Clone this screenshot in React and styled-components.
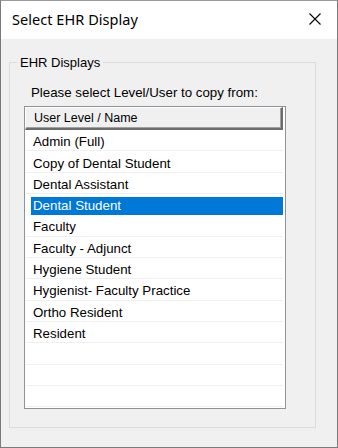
import React from "react";
import styled, { createGlobalStyle } from "styled-components";

const Global = createGlobalStyle`
  html, body { margin: 0; padding: 0; background: #f0f0f0; }
  body { width: 338px; height: 448px; overflow: hidden; }
  * { box-sizing: border-box; }
`;

const Window = styled.div`
  width: 338px;
  height: 448px;
  border: 1px solid #7a7a7a;
  border-top-color: #9a9a9a;
  display: flex;
  flex-direction: column;
  background: #f0f0f0;
`;

const TitleBar = styled.div`
  height: 38px;
  background: #ffffff;
  display: flex;
  align-items: center;
  justify-content: space-between;
  padding: 0 0 2px 11px;
`;

const Title = styled.div`
  font-family: "Noto Sans", "Open Sans", sans-serif;
  font-size: 14.5px;
  color: #000;
  letter-spacing: 0.05px;
`;

const CloseButton = styled.div`
  width: 46px;
  height: 36px;
  display: flex;
  align-items: center;
  justify-content: center;
  margin-right: -1px;
`;

const Body = styled.div`
  flex: 1;
  padding: 16px 0 0 8px;
`;

const GroupBox = styled.fieldset`
  margin: 0;
  width: 307px;
  height: 373px;
  border: 1px solid #dcdcdc;
  padding: 0 0 0 14px;
  font-family: "Liberation Sans", Arial, sans-serif;
`;

const Legend = styled.legend`
  font-size: 13px;
  color: #000;
  padding: 0 3px;
  margin-left: -7px;
  line-height: 15px;
`;

const Prompt = styled.div`
  font-size: 13.3px;
  color: #000;
  margin: 15px 0 0 7px;
  line-height: 16px;
`;

const ListBox = styled.div`
  margin-top: 5px;
  width: 262px;
  height: 303px;
  border: 1px solid #8f9399;
  background: #fff;
  overflow: hidden;
  padding-right: 1px;
`;

const Header = styled.div`
  height: 23px;
  background: #f0f0f0;
  border-top: 1px solid #ffffff;
  border-left: 1px solid #ffffff;
  border-right: 2px solid #6d6d6d;
  border-bottom: 2px solid #6d6d6d;
  box-shadow: inset -1px -1px 0 #a0a0a0;
  display: flex;
  align-items: center;
  padding-left: 8px;
  font-size: 12.5px;
  color: #000;
  margin-right: 1px;
`;

const Row = styled.div`
  height: 21.33px;
  border-bottom: 1px solid #f0f0f0;
  margin: 0 1px 0 1px;
  display: flex;
  align-items: center;
  padding-top: 3px;
`;

const Cell = styled.div`
  margin-left: 5px;
  width: 252px;
  height: 18px;
  display: flex;
  align-items: center;
  padding-left: 2px;
  font-size: 13.3px;
  white-space: nowrap;
  background: ${(p) => (p.$selected ? "#0078d7" : "transparent")};
  color: ${(p) => (p.$selected ? "#ffffff" : "#000000")};
`;

const items = [
  "Admin (Full)",
  "Copy of Dental Student",
  "Dental Assistant",
  "Dental Student",
  "Faculty",
  "Faculty - Adjunct",
  "Hygiene Student",
  "Hygienist- Faculty Practice",
  "Ortho Resident",
  "Resident",
  "",
  "",
  "",
];

export default function App() {
  return (
    <>
      <Global />
      <Window>
        <TitleBar>
          <Title>Select EHR Display</Title>
          <CloseButton>
            <svg width="12" height="12" viewBox="0 0 12 12">
              <path d="M0.5 0.5 L11.5 11.5 M11.5 0.5 L0.5 11.5" stroke="#000" strokeWidth="1.1" fill="none" />
            </svg>
          </CloseButton>
        </TitleBar>
        <Body>
          <GroupBox>
            <Legend>EHR Displays</Legend>
            <Prompt>Please select Level/User to copy from:</Prompt>
            <ListBox>
              <Header>User Level / Name</Header>
              {items.map((t, i) => (
                <Row key={i}>
                  <Cell $selected={t === "Dental Student"}>{t}</Cell>
                </Row>
              ))}
            </ListBox>
          </GroupBox>
        </Body>
      </Window>
    </>
  );
}
